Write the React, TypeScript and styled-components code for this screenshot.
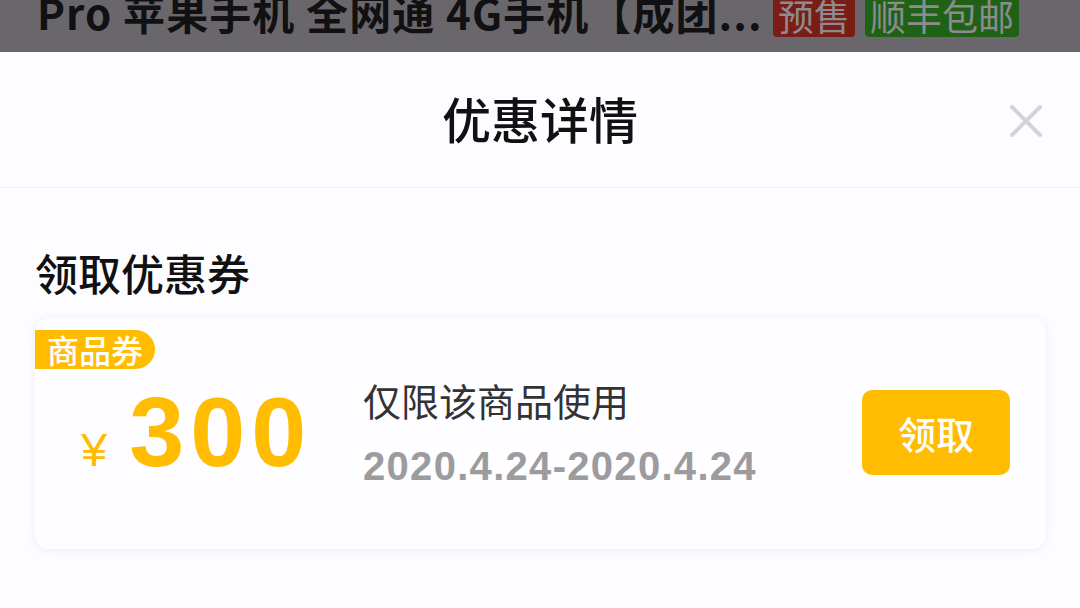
import React from 'react';
import styled, { createGlobalStyle } from 'styled-components';

const GlobalStyle = createGlobalStyle`
  html, body {
    margin: 0;
    padding: 0;
    background: #fdfcfe;
  }
  body {
    width: 1080px;
    height: 608px;
    overflow: hidden;
    font-family: "Noto Sans CJK SC", "Noto Sans", sans-serif;
  }
  * {
    box-sizing: border-box;
  }
`;

const YELLOW = '#ffbc00';

const Page = styled.div`
  width: 1080px;
  height: 608px;
  display: flex;
  flex-direction: column;
  background: #fdfcfe;
`;

// dimmed product title left over behind the sheet
const DimBar = styled.div`
  height: 52px;
  flex-shrink: 0;
  background: #69676b;
  overflow: hidden;
  display: flex;
  align-items: flex-end;
  padding: 0 37px 15px;
  gap: 10px;
`;

const DimTitle = styled.div`
  font-size: 42px;
  line-height: 44px;
  padding-bottom: 3px;
  font-weight: 700;
  color: #111012;
  white-space: nowrap;
  letter-spacing: 1.1px;
`;

const DimTag = styled.div<{ $tone: 'red' | 'green' }>`
  height: 44px;
  line-height: 44px;
  padding: 0 5px;
  border-radius: 4px;
  font-size: 36px;
  color: #8d8b8f;
  white-space: nowrap;
  background: ${(p) => (p.$tone === 'red' ? '#7b1d17' : '#1f6216')};
`;

const Header = styled.div`
  height: 136px;
  flex-shrink: 0;
  display: grid;
  grid-template-columns: 1fr auto 1fr;
  align-items: center;
  padding: 0 37px 0;
  border-bottom: 1px solid #f1f0f3;
`;

const HeaderTitle = styled.h1`
  grid-column: 2;
  margin: 0 0 4px;
  font-size: 49px;
  line-height: 56px;
  font-weight: 500;
  color: #111012;
`;

const CloseButton = styled.button`
  grid-column: 3;
  justify-self: end;
  width: 34px;
  height: 34px;
  margin-top: 3px;
  padding: 0;
  border: none;
  background: none;
  display: flex;
  align-items: center;
  justify-content: center;
`;

const Body = styled.div`
  padding: 59px 34px 0 35px;
  display: flex;
  flex-direction: column;
  gap: 21px;
`;

const SectionTitle = styled.h2`
  margin: 0;
  font-size: 43px;
  line-height: 50px;
  font-weight: 500;
  color: #111012;
`;

const Card = styled.div`
  position: relative;
  height: 231px;
  border-radius: 14px;
  background: #fefdff;
  box-shadow: 0 1px 10px rgba(60, 40, 90, 0.07);
  display: flex;
  align-items: center;
  padding: 0 36px 0 46px;
`;

const TypeBadge = styled.div`
  position: absolute;
  left: 0;
  top: 12px;
  height: 39px;
  width: 120px;
  padding-left: 12px;
  border-radius: 0 20px 20px 0;
  background: ${YELLOW};
  color: #fff;
  font-size: 32px;
  font-weight: 500;
  line-height: 39px;
`;

const Amount = styled.div`
  width: 282px;
  display: flex;
  align-items: baseline;
  gap: 22px;
  color: ${YELLOW};
  font-family: "Liberation Sans", Arial, sans-serif;
  margin-top: -4px;
`;

const Currency = styled.span`
  font-size: 47px;
  font-weight: 400;
`;

const Value = styled.span`
  font-size: 99px;
  line-height: 110px;
  font-weight: 700;
  letter-spacing: 6px;
`;

const Info = styled.div`
  flex: 1;
  display: flex;
  flex-direction: column;
  gap: 16px;
  margin-top: -2px;
`;

const InfoTitle = styled.div`
  font-size: 38px;
  line-height: 50px;
  color: #333234;
`;

const InfoDate = styled.div`
  font-family: "Liberation Sans", Arial, sans-serif;
  font-weight: 700;
  font-size: 40px;
  line-height: 50px;
  color: #9c9b9e;
  letter-spacing: 1.3px;
`;

const ClaimButton = styled.button`
  width: 148px;
  height: 85px;
  border: none;
  border-radius: 10px;
  background: ${YELLOW};
  color: #fff;
  font-family: "Noto Sans CJK SC", sans-serif;
  font-size: 38px;
  font-weight: 500;
  margin-top: -2px;
`;

const CloseIcon = () => (
  <svg width="34" height="34" viewBox="0 0 34 34">
    <path d="M3 3 L31 31 M31 3 L3 31" stroke="#d5d3d7" strokeWidth="4" strokeLinecap="round" />
  </svg>
);

export default function App() {
  return (
    <>
      <GlobalStyle />
      <Page>
        <DimBar>
          <DimTitle>Pro 苹果手机 全网通 4G手机【成团...</DimTitle>
          <DimTag $tone="red">预售</DimTag>
          <DimTag $tone="green">顺丰包邮</DimTag>
        </DimBar>
        <Header>
          <HeaderTitle>优惠详情</HeaderTitle>
          <CloseButton aria-label="关闭">
            <CloseIcon />
          </CloseButton>
        </Header>
        <Body>
          <SectionTitle>领取优惠券</SectionTitle>
          <Card>
            <TypeBadge>商品券</TypeBadge>
            <Amount>
              <Currency>¥</Currency>
              <Value>300</Value>
            </Amount>
            <Info>
              <InfoTitle>仅限该商品使用</InfoTitle>
              <InfoDate>2020.4.24-2020.4.24</InfoDate>
            </Info>
            <ClaimButton>领取</ClaimButton>
          </Card>
        </Body>
      </Page>
    </>
  );
}
